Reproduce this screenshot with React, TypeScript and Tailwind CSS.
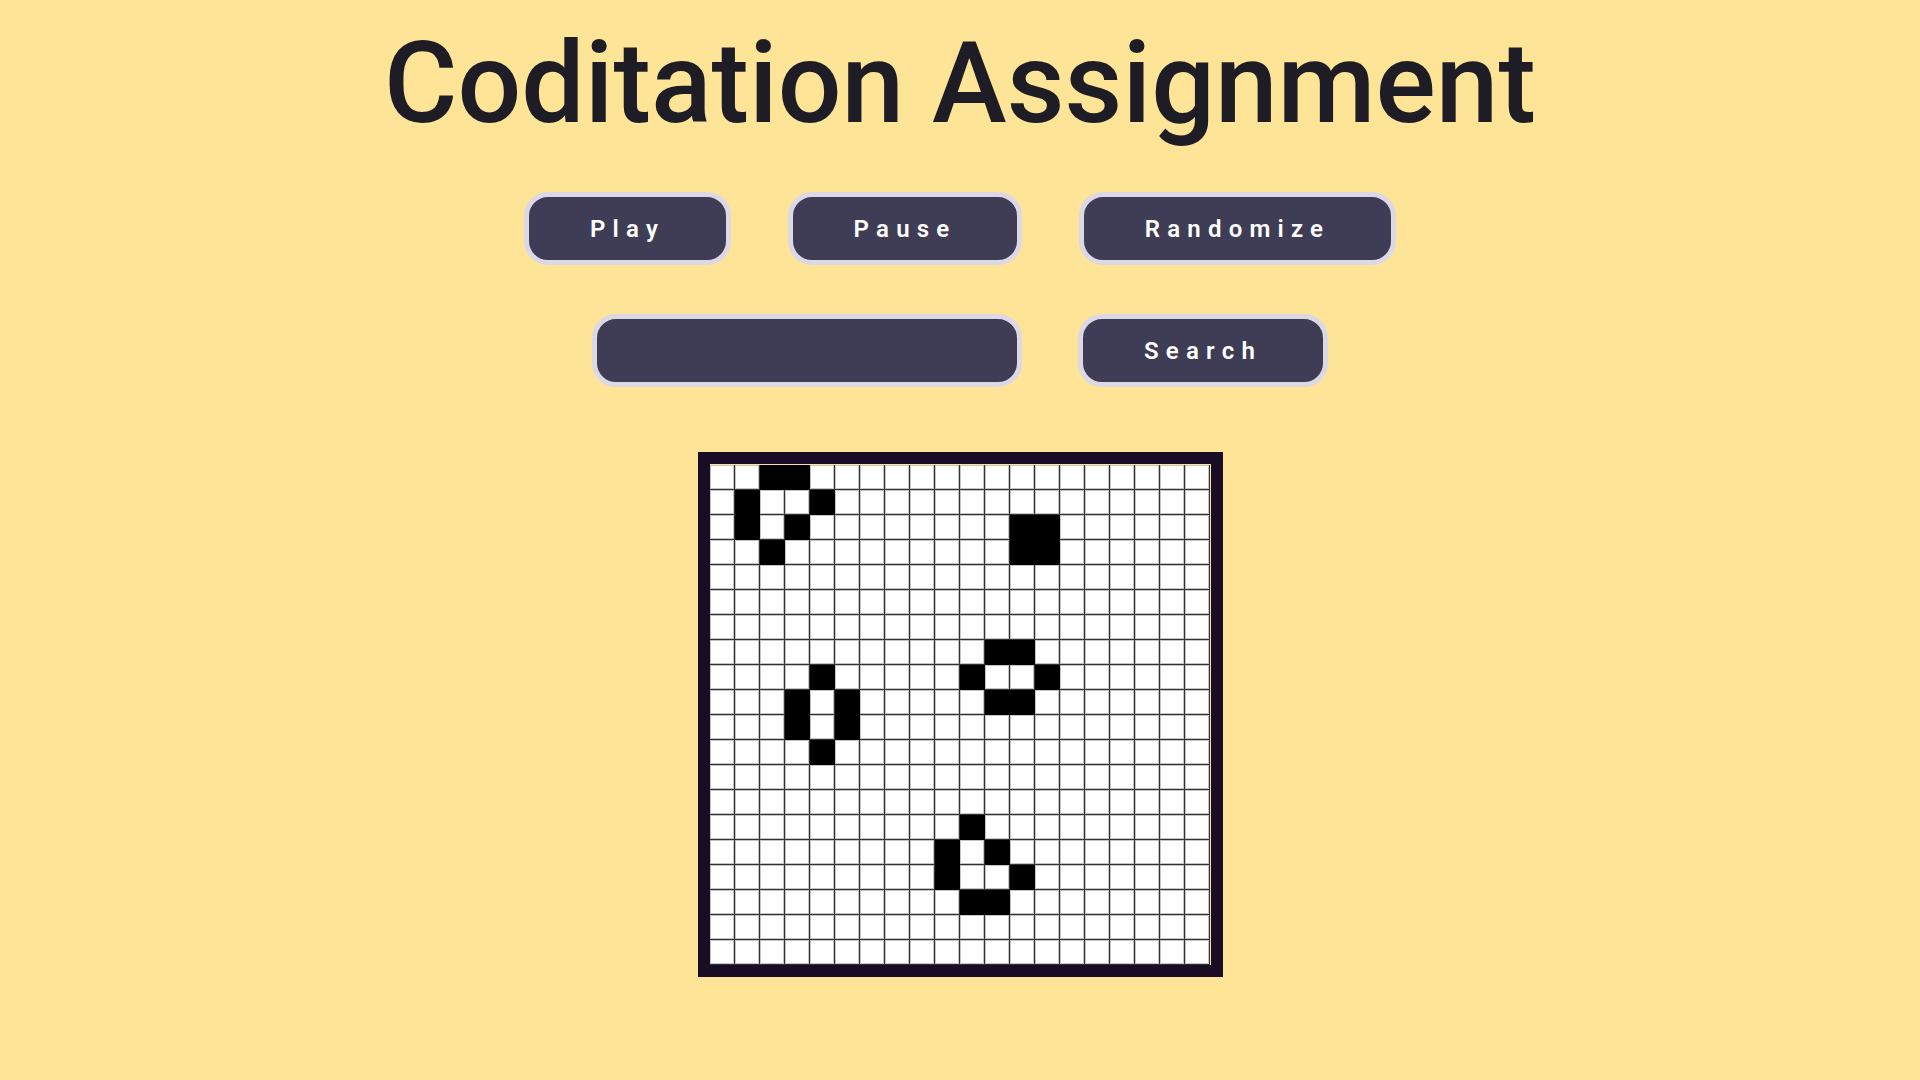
import React from "react";

const SIZE = 20;

// cells alive in the current generation, as [row, col]
const LIVE: [number, number][] = [
  [0, 2], [0, 3], [1, 1], [1, 4], [2, 1], [2, 3], [3, 2],
  [2, 12], [2, 13], [3, 12], [3, 13],
  [7, 11], [7, 12], [8, 10], [8, 13], [9, 11], [9, 12],
  [8, 4], [9, 3], [9, 5], [10, 3], [10, 5], [11, 4],
  [14, 10], [15, 9], [15, 11], [16, 9], [16, 12], [17, 10], [17, 11],
];

const alive = new Set(LIVE.map(([r, c]) => `${r}-${c}`));

const btn =
  "flex h-[73px] items-center justify-center rounded-[24px] border-[5px] border-[#dcd8e6] bg-[#3f3c55] text-[24px] font-semibold tracking-[0.3em] text-white";

const Board = () => (
  <div className="border-[12px] border-[#180d24] bg-[#fde496] pr-px pt-px">
    <div className="grid grid-cols-[repeat(20,25px)]">
      {Array.from({ length: SIZE * SIZE }).map((_, i) => {
        const r = Math.floor(i / SIZE);
        const c = i % SIZE;
        const on = alive.has(`${r}-${c}`);
        return (
          <div
            key={i}
            className={`h-[25px] w-[25px] border-b border-r ${
              on
                ? "border-black bg-black"
                : "border-[#333333] bg-white shadow-[inset_0_0_0_1px_#c4c4c4]"
            }`}
          />
        );
      })}
    </div>
  </div>
);

export default function App() {
  return (
    <div
      className="flex min-h-screen flex-col items-center bg-[#fde496]"
      style={{ fontFamily: "Roboto, 'Liberation Sans', sans-serif" }}
    >
      <h1 className="mt-[18px] text-[112.5px] font-medium leading-[132px] text-[#1e1c24]">
        Coditation Assignment
      </h1>

      <div className="mt-[42px] flex gap-[57px]">
        <button className={`${btn} w-[207px]`}>Play</button>
        <button className={`${btn} w-[234px]`}>Pause</button>
        <button className={`${btn} w-[317px]`}>Randomize</button>
      </div>

      <div className="mt-[49px] flex gap-[56px]">
        <input
          type="text"
          className="h-[73px] w-[430px] rounded-[24px] border-[5px] border-[#dcd8e6] bg-[#3f3c55] px-5 text-[24px] text-white outline-none"
        />
        <button className={`${btn} w-[250px]`}>Search</button>
      </div>

      <div className="mt-[65px]">
        <Board />
      </div>
    </div>
  );
}
